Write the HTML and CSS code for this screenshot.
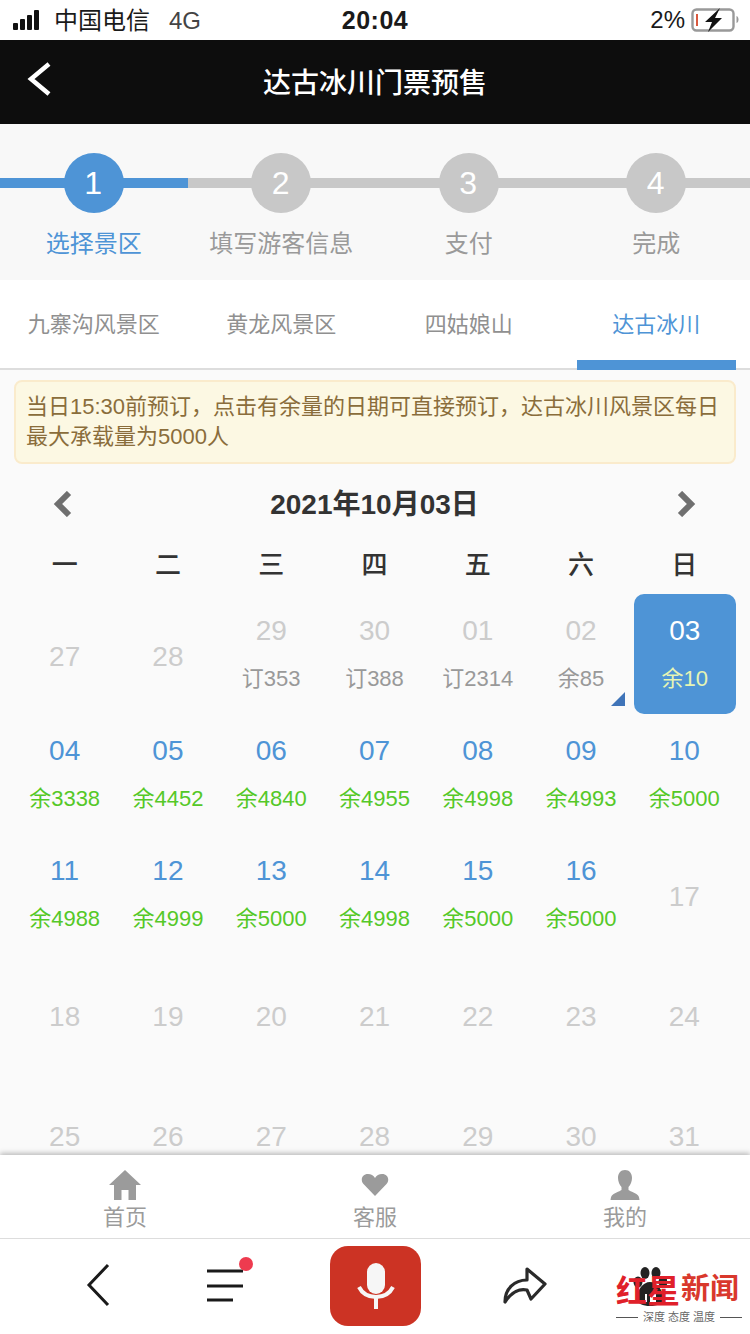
FILE: index.html
```html
<!DOCTYPE html>
<html lang="zh-CN">
<head>
    <meta charset="UTF-8">
    <meta name="viewport" content="width=device-width, initial-scale=1.0">
    <title>达古冰川门票预售</title>
    <link rel="stylesheet" href="styles.css">
</head>
<body>
    <!-- Status bar -->
    <div class="status-bar">
        <div class="status-left">
            <span class="signal"><i></i><i></i><i></i><i></i></span>
            <span class="carrier">中国电信</span>
            <span class="network">4G</span>
        </div>
        <div class="status-time">20:04</div>
        <div class="status-right">
            <span>2%</span>
            <svg class="battery" width="48" height="24" viewBox="0 0 48 24">
                <rect x="1.500" y="1.500" width="41" height="21" rx="4" fill="none" stroke="#999" stroke-width="2.400"/>
                <rect x="5" y="6" width="2" height="12" fill="#d9593f"/>
                <path d="M45.500 8v7c1.500-.5 2-2 2-3.500s-.5-3-2-3.500z" fill="#999"/>
                <path d="M29 0 14 14h7l-4 10 14-14h-7l5-10z" fill="#111"/>
            </svg>
        </div>
    </div>

    <!-- Header -->
    <header class="top-header">
        <svg class="back-icon" width="26" height="36" viewBox="0 0 26 36">
            <path d="M23 3 5 18l18 15" fill="none" stroke="#fff" stroke-width="4.500"/>
        </svg>
        <h1>达古冰川门票预售</h1>
    </header>

    <!-- Steps -->
    <section class="steps">
        <div class="step active"><span class="step-num">1</span><span class="step-name">选择景区</span></div>
        <div class="step"><span class="step-num">2</span><span class="step-name">填写游客信息</span></div>
        <div class="step"><span class="step-num">3</span><span class="step-name">支付</span></div>
        <div class="step"><span class="step-num">4</span><span class="step-name">完成</span></div>
    </section>

    <!-- Scenic area tabs -->
    <nav class="tabs">
        <a>九寨沟风景区</a>
        <a>黄龙风景区</a>
        <a>四姑娘山</a>
        <a class="active">达古冰川</a>
    </nav>

    <main class="content">
        <div class="notice">当日15:30前预订，点击有余量的日期可直接预订，达古冰川风景区每日最大承载量为5000人</div>

        <div class="month-bar">
            <svg width="20" height="26" viewBox="0 0 20 26"><path d="M17 2 6 13l11 11" fill="none" stroke="#6f6f6f" stroke-width="6"/></svg>
            <h2>2021年10月03日</h2>
            <svg width="20" height="26" viewBox="0 0 20 26"><path d="M3 2l11 11L3 24" fill="none" stroke="#6f6f6f" stroke-width="6"/></svg>
        </div>

        <div class="week-row">
            <span>一</span><span>二</span><span>三</span><span>四</span><span>五</span><span>六</span><span>日</span>
        </div>

        <div class="calendar">
            <div class="cell"><span class="day">27</span></div>
            <div class="cell"><span class="day">28</span></div>
            <div class="cell two"><span class="day">29</span><span class="sub">订353</span></div>
            <div class="cell two"><span class="day">30</span><span class="sub">订388</span></div>
            <div class="cell two"><span class="day">01</span><span class="sub">订2314</span></div>
            <div class="cell two corner"><span class="day">02</span><span class="sub">余85</span></div>
            <div class="cell two selected"><span class="day">03</span><span class="sub">余10</span></div>

            <div class="cell two open"><span class="day">04</span><span class="sub">余3338</span></div>
            <div class="cell two open"><span class="day">05</span><span class="sub">余4452</span></div>
            <div class="cell two open"><span class="day">06</span><span class="sub">余4840</span></div>
            <div class="cell two open"><span class="day">07</span><span class="sub">余4955</span></div>
            <div class="cell two open"><span class="day">08</span><span class="sub">余4998</span></div>
            <div class="cell two open"><span class="day">09</span><span class="sub">余4993</span></div>
            <div class="cell two open"><span class="day">10</span><span class="sub">余5000</span></div>

            <div class="cell two open"><span class="day">11</span><span class="sub">余4988</span></div>
            <div class="cell two open"><span class="day">12</span><span class="sub">余4999</span></div>
            <div class="cell two open"><span class="day">13</span><span class="sub">余5000</span></div>
            <div class="cell two open"><span class="day">14</span><span class="sub">余4998</span></div>
            <div class="cell two open"><span class="day">15</span><span class="sub">余5000</span></div>
            <div class="cell two open"><span class="day">16</span><span class="sub">余5000</span></div>
            <div class="cell"><span class="day">17</span></div>

            <div class="cell"><span class="day">18</span></div>
            <div class="cell"><span class="day">19</span></div>
            <div class="cell"><span class="day">20</span></div>
            <div class="cell"><span class="day">21</span></div>
            <div class="cell"><span class="day">22</span></div>
            <div class="cell"><span class="day">23</span></div>
            <div class="cell"><span class="day">24</span></div>

            <div class="cell"><span class="day">25</span></div>
            <div class="cell"><span class="day">26</span></div>
            <div class="cell"><span class="day">27</span></div>
            <div class="cell"><span class="day">28</span></div>
            <div class="cell"><span class="day">29</span></div>
            <div class="cell"><span class="day">30</span></div>
            <div class="cell"><span class="day">31</span></div>
        </div>
    </main>

    <!-- Tab bar -->
    <footer class="tab-bar">
        <a>
            <svg width="32" height="30" viewBox="0 0 32 30"><path d="M16 0 0 15h5v15h7.500v-10h7v10H27V15h5z" fill="#9b9b9b"/></svg>
            <span>首页</span>
        </a>
        <a>
            <svg width="28" height="30" viewBox="0 0 28 30"><path d="M14 26 2.500 14C-1 10 1 4 7 4c3 0 5.500 1.500 7 4 1.500-2.500 4-4 7-4 6 0 8 6 4.500 10z" fill="#9b9b9b"/></svg>
            <span>客服</span>
        </a>
        <a>
            <svg width="30" height="30" viewBox="0 0 30 30"><path d="M15 0c4.500 0 7 3.500 7 8 0 3.500-1.500 7-3.500 9v3c2 1.500 8 3 10 6 .5 1 .8 2.500 1 4H.5c.2-1.500.5-3 1-4 2-3 8-4.500 10-6v-3C9.500 15 8 11.500 8 8c0-4.500 2.500-8 7-8z" fill="#9b9b9b"/></svg>
            <span>我的</span>
        </a>
    </footer>

    <!-- App toolbar -->
    <div class="toolbar">
        <svg class="tool-back" width="24" height="44" viewBox="0 0 24 44"><path d="M22 2 3 22l19 20" fill="none" stroke="#1a1a1a" stroke-width="3"/></svg>
        <div class="tool-menu">
            <svg width="40" height="36" viewBox="0 0 40 36">
                <path d="M1 4h36M1 19h36M1 33h26" fill="none" stroke="#1a1a1a" stroke-width="3.200"/>
            </svg>
            <span class="dot"></span>
        </div>
        <div class="mic-btn">
            <svg width="38" height="46" viewBox="0 0 38 46">
                <rect x="10" y="0" width="18" height="31" rx="9" fill="#f6f6f6"/>
                <path d="M2 24c3 6 9 10 17 10s14-4 17-10" fill="none" stroke="#f6f6f6" stroke-width="4"/>
                <rect x="17" y="33" width="4" height="13" fill="#f6f6f6"/>
            </svg>
        </div>
        <svg class="tool-share" width="46" height="40" viewBox="0 0 46 40"><path d="M3 37C3 24 12 15 25 15V4l18 15-14 15-4-9c-9-2-16 3-22 12z" fill="none" stroke="#2a2a2a" stroke-width="3.200" stroke-linejoin="round"/></svg>
    </div>

    <!-- Watermark over the toolbar -->
    <div class="logo">
        <div class="logo-main">
            <svg class="paw" width="34" height="40" viewBox="0 0 34 40">
                <ellipse cx="5" cy="15" rx="4.500" ry="5.500" fill="#222"/><ellipse cx="12" cy="6" rx="4.500" ry="6" fill="#222"/><ellipse cx="23" cy="6" rx="4.500" ry="6" fill="#222"/><ellipse cx="30" cy="15" rx="4.500" ry="5.500" fill="#222"/>
                <path d="M17 15c7 0 13 8 13 16 0 6-6 8-13 8S4 37 4 31c0-8 6-16 13-16z" fill="#222"/>
                <path d="M12 27h2v8h-2zM17 27h6v8h-6z" fill="#fff"/>
            </svg>
            <span class="logo-hong">红</span>
            <span class="logo-xing">星</span>
            <span class="logo-news">新闻</span>
        </div>
        <div class="logo-tag"><i></i><span>深度 态度 温度</span><i></i></div>
    </div>
</body>
</html>
```

FILE: styles.css
```css
/* General */
* {
    box-sizing: border-box;
}
html, body {
    height: 100%;
}
body {
    margin: 0;
    height: 1334px;
    display: flex;
    flex-direction: column;
    overflow: hidden;
    position: relative;
    background: #fafafa;
    color: #333;
    font-family: "Liberation Sans", "Noto Sans CJK SC", sans-serif;
}

/* Status bar */
.status-bar {
    height: 40px;
    flex: none;
    background: #fff;
    color: #1a1a1a;
    display: flex;
    align-items: center;
    justify-content: space-between;
    padding: 0 11px 0 13px;
    font-size: 24px;
    position: relative;
}
.status-left, .status-right {
    display: flex;
    align-items: center;
}
.signal {
    display: flex;
    align-items: flex-end;
    gap: 2px;
    height: 20px;
    margin-right: 15px;
}
.signal i {
    width: 5px;
    background: #111;
    border-radius: 1px;
}
.signal i:nth-child(1) { height: 7px; }
.signal i:nth-child(2) { height: 11px; }
.signal i:nth-child(3) { height: 15px; }
.signal i:nth-child(4) { height: 20px; }
.carrier {
    margin-top: -4px;
}
.network {
    margin-left: 19px;
    margin-top: 1px;
    color: #444;
}
.status-time {
    position: absolute;
    left: 0;
    right: 0;
    text-align: center;
    font-size: 25px;
    font-weight: bold;
    letter-spacing: .5px;
}
.status-right {
    position: relative;
    gap: 6px;
}

/* Header */
.top-header {
    height: 84px;
    flex: none;
    background: #0d0d0d;
    color: #fff;
    display: flex;
    align-items: center;
    justify-content: center;
    position: relative;
}
.top-header h1 {
    margin: 0 0 2px;
    font-size: 28px;
    font-weight: 500;
}
.back-icon {
    position: absolute;
    left: 26px;
    top: 21px;
}

/* Steps */
.steps {
    height: 156px;
    flex: none;
    background: #f8f8f8;
    display: flex;
    padding-top: 29px;
}
.step {
    flex: 1;
    display: flex;
    flex-direction: column;
    align-items: center;
    gap: 14px;
    color: #9a9a9a;
    font-size: 24px;
    background: linear-gradient(#c8c8c8, #c8c8c8) no-repeat 0 25px / 100% 10px;
}
.step-num {
    width: 60px;
    height: 60px;
    border-radius: 50%;
    background: #c8c8c8;
    color: #fff;
    font-size: 32px;
    padding-right: 1px;
    display: flex;
    align-items: center;
    justify-content: center;
}
.step.active {
    color: #4e94d6;
    background-image: linear-gradient(#4e94d6, #4e94d6);
}
.step.active .step-num {
    background: #4e94d6;
}
.step-name {
    line-height: 34px;
}

/* Tabs */
.tabs {
    height: 90px;
    flex: none;
    background: #fff;
    border-bottom: 2px solid #ddd;
    display: grid;
    grid-template-columns: repeat(4, 1fr);
}
.tabs a {
    margin: 0 14px;
    font-size: 22px;
    color: #909090;
    text-align: center;
    white-space: nowrap;
    line-height: 90px;
    height: 90px;
}
.tabs a.active {
    color: #4e94d6;
    border-bottom: 10px solid #4e94d6;
}

/* Main content */
.content {
    flex: 1;
    min-height: 0;
    overflow: hidden;
    padding: 10px 14px 0;
}
.notice {
    height: 84px;
    background: #fcf8e3;
    border: 2px solid #faebcc;
    border-radius: 8px;
    color: #8a6d3b;
    font-size: 22px;
    line-height: 30px;
    padding: 10px 10px 0;
}
.month-bar {
    height: 80px;
    display: flex;
    align-items: center;
    justify-content: space-between;
    padding: 0 39px 0 38px;
}
.month-bar h2 {
    margin: 0 0 4px;
    font-size: 28px;
    font-weight: bold;
    color: #333;
}
.week-row {
    display: grid;
    grid-template-columns: repeat(7, 1fr);
    height: 50px;
    margin-left: -1px;
    padding-bottom: 14px;
    align-items: center;
    text-align: center;
    font-size: 26px;
    font-weight: 500;
    color: #333;
}

/* Calendar */
.calendar {
    display: grid;
    grid-template-columns: repeat(7, 1fr);
    grid-auto-rows: 120px;
    margin-left: -1px;
}
.cell {
    position: relative;
    display: flex;
    flex-direction: column;
    align-items: center;
    justify-content: center;
    padding-top: 6px;
    border-radius: 10px;
    color: #ccc;
}
.cell.two {
    justify-content: flex-start;
    padding-top: 19px;
    gap: 12px;
}
.day {
    font-size: 28px;
    line-height: 36px;
}
.sub {
    font-size: 22px;
    line-height: 36px;
    color: #999;
}
.cell.open .day {
    color: #4e94d6;
}
.cell.open .sub {
    color: #55c828;
}
.cell.selected {
    background: #4e94d6;
    margin-left: 1px;
}
.cell.selected .day {
    color: #fff;
}
.cell.selected .sub {
    color: #e6f5b4;
}
.cell.corner::after {
    content: "";
    position: absolute;
    right: 8px;
    bottom: 8px;
    border-style: solid;
    border-width: 0 0 14px 14px;
    border-color: transparent transparent #3f74b8 transparent;
}

/* Tab bar */
.tab-bar {
    height: 84px;
    flex: none;
    background: #fff;
    border-bottom: 1px solid #ddd;
    box-shadow: 0 -2px 5px rgba(0, 0, 0, .25);
    display: flex;
    position: relative;
    padding-top: 15px;
}
.tab-bar a {
    flex: 1;
    display: flex;
    flex-direction: column;
    align-items: center;
    color: #9b9b9b;
    font-size: 22px;
    line-height: 30px;
    gap: 3px;
}

/* Toolbar */
.toolbar {
    height: 95px;
    flex: none;
    background: #fff;
    position: relative;
    display: flex;
    align-items: center;
    padding: 0 0 0 86px;
}
.tool-back {
    margin-top: -3px;
}
.tool-menu {
    position: relative;
    margin-left: 96px;
    width: 40px;
    height: 36px;
    margin-top: -3px;
}
.dot {
    position: absolute;
    left: 33px;
    top: -10px;
    width: 14px;
    height: 14px;
    border-radius: 50%;
    background: #ee3b4f;
}
.mic-btn {
    width: 91px;
    height: 80px;
    margin-left: 84px;
    margin-top: -2px;
    background: #cc3324;
    border-radius: 18px;
    display: flex;
    align-items: center;
    justify-content: center;
}
.tool-share {
    margin-left: 81px;
    margin-top: -3px;
}

/* Logo watermark */
.logo {
    position: absolute;
    left: 616px;
    top: 1264px;
    width: 126px;
    background: #fff;
}
.logo-main {
    position: relative;
    height: 46px;
    padding-left: 65px;
    display: flex;
    align-items: center;
}
.paw {
    position: absolute;
    left: 17px;
    top: 3px;
}
.logo-hong, .logo-xing {
    position: absolute;
    color: #e0202a;
    font-family: "Noto Sans CJK SC", sans-serif;
    font-weight: bold;
    line-height: 38px;
}
.logo-hong {
    left: 0;
    top: 6px;
    font-size: 31px;
}
.logo-xing {
    left: 31px;
    top: 6px;
    font-size: 33px;
}
.logo-news {
    color: #d9382c;
    font-size: 29px;
    font-weight: bold;
    font-family: "Liberation Serif", "Noto Sans CJK SC", serif;
    line-height: 38px;
    white-space: nowrap;
    margin-top: 4px;
}
.logo-tag {
    display: flex;
    align-items: center;
    gap: 5px;
    font-size: 11px;
    line-height: 14px;
    color: #666;
    white-space: nowrap;
}
.logo-tag i {
    flex: 1;
    height: 1px;
    background: #555;
}
```
